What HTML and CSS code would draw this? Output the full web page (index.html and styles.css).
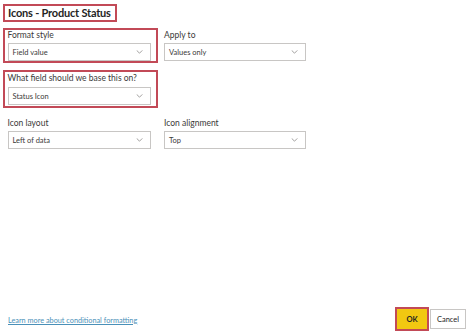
FILE: index.html
```html
<!DOCTYPE html>
<html>
<head>
<meta charset="utf-8">
<link rel="stylesheet" href="styles.css">
</head>
<body>
<div class="page">
  <div class="title-wrap"><h1 class="title">Icons - Product Status</h1></div>
  <div class="grid">
    <div class="field hl first">
      <div class="label">Format style</div>
      <div class="select"><span>Field value</span><svg class="chev" viewBox="0 0 8 5" width="7" height="4"><path d="M0.5 0.5 L4 4 L7.5 0.5" fill="none" stroke="#8a8886" stroke-width="1"/></svg></div>
    </div>
    <div class="field first">
      <div class="label">Apply to</div>
      <div class="select"><span>Values only</span><svg class="chev" viewBox="0 0 8 5" width="7" height="4"><path d="M0.5 0.5 L4 4 L7.5 0.5" fill="none" stroke="#8a8886" stroke-width="1"/></svg></div>
    </div>
    <div class="field hl second">
      <div class="label">What field should we base this on?</div>
      <div class="select"><span>Status Icon</span><svg class="chev" viewBox="0 0 8 5" width="7" height="4"><path d="M0.5 0.5 L4 4 L7.5 0.5" fill="none" stroke="#8a8886" stroke-width="1"/></svg></div>
    </div>
    <div class="empty"></div>
    <div class="field third">
      <div class="label">Icon layout</div>
      <div class="select"><span>Left of data</span><svg class="chev" viewBox="0 0 8 5" width="7" height="4"><path d="M0.5 0.5 L4 4 L7.5 0.5" fill="none" stroke="#8a8886" stroke-width="1"/></svg></div>
    </div>
    <div class="field third">
      <div class="label">Icon alignment</div>
      <div class="select"><span>Top</span><svg class="chev" viewBox="0 0 8 5" width="7" height="4"><path d="M0.5 0.5 L4 4 L7.5 0.5" fill="none" stroke="#8a8886" stroke-width="1"/></svg></div>
    </div>
  </div>
  <div class="spacer"></div>
  <div class="footer">
    <a class="link" href="#">Learn more about conditional formatting</a>
    <div class="buttons">
      <div class="ok-wrap"><button class="btn ok">OK</button></div>
      <button class="btn cancel">Cancel</button>
    </div>
  </div>
</div>
</body>
</html>
```
FILE: styles.css
```css
html, body {
  margin: 0;
  padding: 0;
  background: #ffffff;
}
body {
  font-family: "Lato", "Open Sans", sans-serif;
  color: #252423;
  width: 474px;
  height: 335px;
  overflow: hidden;
}
.page {
  display: flex;
  flex-direction: column;
  height: 335px;
  box-sizing: border-box;
  padding: 4px 8px 4px 3px;
}
.title-wrap {
  display: flex;
}
.title {
  margin: 0;
  font-size: 11px;
  font-weight: 700;
  letter-spacing: -0.2px;
  line-height: 14px;
  padding: 0 4px 0 3px;
  border: 2px solid #c24a57;
  color: #252423;
}
.grid {
  display: grid;
  grid-template-columns: 154.5px 153.5px;
  column-gap: 2px;
  margin-top: 6px;
}
.field {
  box-sizing: border-box;
  padding: 0 5px 0 2.5px;
  border: 2px solid transparent;
}
.field.hl {
  border-color: #c24a57;
}
.field.second {
  margin-top: 7px;
  padding-top: 1px;
  padding-bottom: 1px;
}
.field.second .label {
  margin-bottom: 4px;
}
.field.third {
  margin-top: 8px;
}
.label {
  font-size: 8.5px;
  line-height: 10px;
  color: #3b3a39;
  margin-bottom: 3px;
}
.select {
  display: flex;
  align-items: center;
  justify-content: space-between;
  height: 18px;
  box-sizing: border-box;
  border: 1px solid #c8c6c4;
  padding: 0 7px 0 4px;
  font-size: 7.5px;
  color: #3b3a39;
}
.chev {
  flex: none;
}
.spacer {
  flex: 1;
}
.footer {
  display: flex;
  align-items: center;
  justify-content: space-between;
  padding-left: 5px;
}
.link {
  font-size: 7.3px;
  color: #4a90b8;
  text-decoration: underline;
  margin-top: 2px;
}
.buttons {
  display: flex;
  align-items: center;
  gap: 1px;
}
.ok-wrap {
  border: 2px solid #c24a57;
  padding: 0;
  display: flex;
}
.btn {
  font-family: inherit;
  font-size: 7.5px;
  height: 20px;
  box-sizing: border-box;
  border: 1px solid #c8c6c4;
  background: #fff;
  color: #252423;
  padding: 0;
}
.ok {
  width: 30px;
  background: #f2c811;
  border-color: #f2c811;
  font-weight: 700;
}
.cancel {
  width: 36px;
}
```
